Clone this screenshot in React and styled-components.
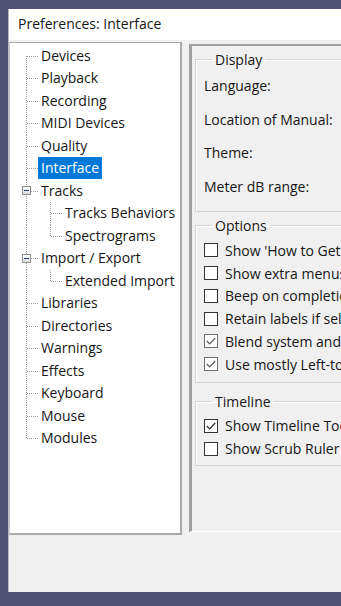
import React from 'react';
import styled, { createGlobalStyle, css } from 'styled-components';

const GlobalStyle = createGlobalStyle`
  html, body {
    margin: 0;
    padding: 0;
    background: #4e5174;
    overflow: hidden;
  }
  body {
    width: 341px;
    height: 606px;
    font-family: "Open Sans", "Noto Sans", sans-serif;
  }
`;

const Window = styled.div`
  margin: 9px 0 0 8px;
  width: 620px;
  height: 583px;
  background: #f0f0f0;
  border-left: 1px solid #b9b9c4;
  box-sizing: border-box;
  color: #161616;
`;

const TitleBar = styled.div`
  height: 31px;
  box-sizing: border-box;
  background: #ffffff;
  display: flex;
  align-items: center;
  padding: 0 0 3px 9px;
  font-size: 14px;
`;

const Body = styled.div`
  display: flex;
  align-items: flex-start;
  padding-top: 2px;
`;

const Tree = styled.ul`
  list-style: none;
  margin: 0;
  padding: 1.5px 0 0 4px;
  width: 173px;
  height: 493px;
  box-sizing: border-box;
  background: #ffffff;
  border: 1px solid #a9a9a9;
  border-left-color: #c8c8c8;
  border-right-width: 2px;
  border-bottom-width: 2px;
  font-size: 14px;
`;

const Row = styled.li`
  display: flex;
  align-items: center;
  height: 22.5px;
`;

const dotsV = 'repeating-linear-gradient(to bottom, #9c9c9c 0 1px, transparent 1px 2px)';
const dotsH = 'repeating-linear-gradient(to right, #9c9c9c 0 1px, transparent 1px 2px)';

// indent column that only carries the parent level's vertical guide
const Guide = styled.span`
  flex: 0 0 24px;
  height: 100%;
  background: ${dotsV} 12px 0 / 1px 100% no-repeat;
`;

// indent column with the elbow leading to the label
const Elbow = styled.span`
  flex: 0 0 24px;
  height: 100%;
  display: flex;
  align-items: center;
  justify-content: center;
  background:
    ${dotsH} 13px 11px / 11px 1px no-repeat,
    ${({ $v }) =>
      $v === 'top'
        ? `${dotsV} 12px 0 / 1px 12px no-repeat`
        : $v === 'bottom'
        ? `${dotsV} 12px 11px / 1px 12px no-repeat`
        : `${dotsV} 12px 0 / 1px 100% no-repeat`};
`;

const Toggle = styled.span`
  width: 9px;
  height: 9px;
  box-sizing: border-box;
  border: 1px solid #919191;
  background: linear-gradient(#ffffff, #dcdcdc);
  display: flex;
  align-items: center;
  justify-content: center;
  margin-left: 1px;
  &::before {
    content: '';
    width: 5px;
    height: 1px;
    background: #1e3a6e;
  }
`;

const Label = styled.span`
  padding: 0 3px;
  height: 22px;
  line-height: 22px;
  white-space: nowrap;
  ${({ $selected }) =>
    $selected &&
    css`
      background: #0078d7;
      color: #ffffff;
    `}
`;

const Panel = styled.div`
  margin-left: 7px;
  margin-top: 2px;
  flex: 1;
  height: 488px;
  box-sizing: border-box;
  border-left: 3px solid #a0a0a0;
  border-top: 2px solid #a0a0a0;
  border-bottom: 1px solid #ffffff;
  padding: 4px 0 0 3px;
  font-size: 14px;
`;

const Group = styled.fieldset`
  margin: 0 0 ${({ $gap }) => $gap || 0}px 0;
  padding: 0 0 ${({ $pb }) => $pb || 6}px 8px;
  border: 1px solid #d6d6d6;
  box-shadow: inset 1px 1px 0 #ffffff;
  border-radius: 0;
  min-width: 0;
`;

const Legend = styled.legend`
  padding: 0 3px;
  margin-left: 8px;
  line-height: 19px;
`;

const FieldRow = styled.div`
  height: 33.5px;
  display: flex;
  align-items: center;
  white-space: nowrap;
`;

const CheckRow = styled.label`
  height: 22.75px;
  display: flex;
  align-items: center;
  gap: 7px;
  white-space: nowrap;
  &:first-of-type {
    margin-top: 4px;
  }
`;

const Box = styled.span`
  flex: 0 0 14px;
  height: 14px;
  box-sizing: border-box;
  border: 1px solid ${({ $dim }) => ($dim ? '#6f6f6f' : '#333333')};
  background: #ffffff;
  display: flex;
  align-items: center;
  justify-content: center;
`;

const Check = ({ dim }) => (
  <svg width="12" height="12" viewBox="0 0 12 12">
    <path d="M1.8 6 L4.7 8.9 L10.2 3" fill="none" stroke={dim ? '#5c5c5c' : '#2b2b2b'} strokeWidth="1.3" />
  </svg>
);

const tree = [
  { label: 'Devices', v: 'bottom' },
  { label: 'Playback' },
  { label: 'Recording' },
  { label: 'MIDI Devices' },
  { label: 'Quality' },
  { label: 'Interface', selected: true },
  { label: 'Tracks', toggle: true },
  { label: 'Tracks Behaviors', child: true },
  { label: 'Spectrograms', child: true, last: true },
  { label: 'Import / Export', toggle: true },
  { label: 'Extended Import', child: true, last: true },
  { label: 'Libraries' },
  { label: 'Directories' },
  { label: 'Warnings' },
  { label: 'Effects' },
  { label: 'Keyboard' },
  { label: 'Mouse' },
  { label: 'Modules', v: 'top' },
];

const options = [
  { label: "Show 'How to Get Help' at launch" },
  { label: 'Show extra menus' },
  { label: 'Beep on completion of longer activities' },
  { label: 'Retain labels if selection snaps to a label' },
  { label: 'Blend system and Audacity theme', checked: true, dim: true },
  { label: 'Use mostly Left-to-Right layouts in RTL languages', checked: true, dim: true },
];

const timeline = [
  { label: 'Show Timeline Tooltips', checked: true },
  { label: 'Show Scrub Ruler' },
];

const CheckList = ({ items }) =>
  items.map((item) => (
    <CheckRow key={item.label}>
      <Box $dim={item.dim}>{item.checked && <Check dim={item.dim} />}</Box>
      {item.label}
    </CheckRow>
  ));

export default function App() {
  return (
    <>
      <GlobalStyle />
      <Window>
        <TitleBar>Preferences: Interface</TitleBar>
        <Body>
          <Tree>
            {tree.map((item) => (
              <Row key={item.label}>
                {item.child ? (
                  <>
                    <Guide />
                    <Elbow $v={item.last ? 'top' : 'full'} />
                  </>
                ) : (
                  <Elbow $v={item.v || 'full'}>{item.toggle && <Toggle />}</Elbow>
                )}
                <Label $selected={item.selected}>{item.label}</Label>
              </Row>
            ))}
          </Tree>
          <Panel>
            <Group $gap={4} $pb={8}>
              <Legend>Display</Legend>
              <FieldRow>Language:</FieldRow>
              <FieldRow>Location of Manual:</FieldRow>
              <FieldRow>Theme:</FieldRow>
              <FieldRow>Meter dB range:</FieldRow>
            </Group>
            <Group $gap={9} $pb={6}>
              <Legend>Options</Legend>
              <CheckList items={options} />
            </Group>
            <Group $pb={5}>
              <Legend>Timeline</Legend>
              <CheckList items={timeline} />
            </Group>
          </Panel>
        </Body>
      </Window>
    </>
  );
}
